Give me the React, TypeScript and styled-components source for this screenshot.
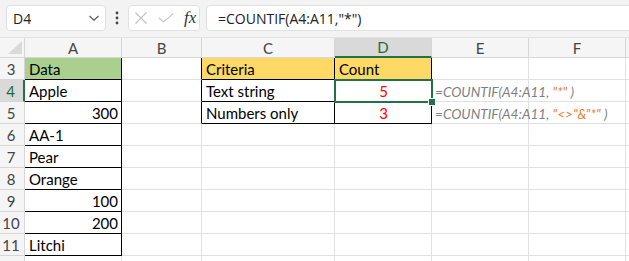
import React from 'react';
import styled, { createGlobalStyle } from 'styled-components';

const GlobalStyle = createGlobalStyle`
  html, body {
    margin: 0;
    padding: 0;
    background: #ffffff;
    overflow: hidden;
  }
`;

const Page = styled.div`
  width: 629px;
  height: 261px;
  overflow: hidden;
  background: #ffffff;
  font-family: Lato, "Liberation Sans", sans-serif;
`;

const Toolbar = styled.div`
  height: 38px;
  box-sizing: border-box;
  padding: 5px 0 0 6px;
  background: #f3f3f3;
  border-bottom: 1px solid #e3e3e3;
  display: flex;
  align-items: flex-start;
  font-family: "Open Sans", "Noto Sans", sans-serif;
`;

const NameBox = styled.div`
  width: 100px;
  height: 26px;
  box-sizing: border-box;
  background: #ffffff;
  border: 1px solid #e1e1e1;
  border-radius: 4px;
  display: flex;
  align-items: center;
  justify-content: space-between;
  padding: 0 5px 0 6px;
  font-size: 14px;
  color: #222;
`;

const Dots = styled.div`
  width: 22px;
  height: 26px;
  display: flex;
  align-items: center;
  justify-content: center;
`;

const FxBox = styled.div`
  width: 72px;
  height: 26px;
  box-sizing: border-box;
  background: #ffffff;
  border: 1px solid #e1e1e1;
  border-radius: 4px;
  display: flex;
  align-items: center;
  padding-left: 4px;
  gap: 10px;
`;

const FxLabel = styled.span`
  font-family: "Liberation Serif", serif;
  font-style: italic;
  font-size: 17px;
  color: #333;
`;

const FormulaInput = styled.div`
  flex: 1;
  height: 26px;
  margin-left: 6px;
  margin-right: -6px;
  box-sizing: border-box;
  background: #ffffff;
  border: 1px solid #e1e1e1;
  border-radius: 4px;
  display: flex;
  align-items: center;
  padding-left: 11px;
  font-size: 14px;
  color: #222;
  white-space: nowrap;
`;

const Sheet = styled.div`
  display: grid;
  grid-template-columns: 25px 97px 80px 133px 97px 97px 97px 30px;
  grid-template-rows: 20px repeat(10, 22px);
`;

const ColHead = styled.div<{ $active?: boolean }>`
  box-sizing: border-box;
  background: ${p => (p.$active ? '#d9d9d9' : '#f5f5f5')};
  border-right: 1px solid #d6d6d6;
  border-bottom: ${p => (p.$active ? '2px solid #217346' : '1px solid #d6d6d6')};
  color: ${p => (p.$active ? '#1e6b41' : '#444')};
  font-size: 15px;
  display: flex;
  align-items: center;
  justify-content: center;
`;

const Corner = styled(ColHead)`
  align-items: flex-end;
  justify-content: flex-end;
  padding: 0 2px 3px 0;
`;

const RowHead = styled.div<{ $active?: boolean }>`
  box-sizing: border-box;
  background: ${p => (p.$active ? '#d9d9d9' : '#f5f5f5')};
  border-right: ${p => (p.$active ? '2px solid #217346' : '1px solid #d6d6d6')};
  border-bottom: 1px solid #d6d6d6;
  color: ${p => (p.$active ? '#1e6b41' : '#444')};
  font-size: 15px;
  line-height: 21px;
  padding-top: 1px;
  text-align: center;
  padding-right: 2px;
  overflow: hidden;
`;

const Cell = styled.div<{
  $fill?: string;
  $align?: string;
  $color?: string;
  $right?: boolean;
  $bottom?: boolean;
}>`
  box-sizing: border-box;
  position: relative;
  background: ${p => p.$fill || '#ffffff'};
  border-right: 1px solid ${p => (p.$right ? '#000' : '#e1e1e1')};
  border-bottom: 1px solid ${p => (p.$bottom ? '#000' : '#e1e1e1')};
  color: ${p => p.$color || '#000'};
  text-align: ${p => p.$align || 'left'};
  font-size: 15px;
  line-height: 22px;
  padding: 0 3px 0 4px;
  white-space: nowrap;
  overflow: visible;
`;

// spills over into the next columns, as excel does for long text
const Note = styled.span`
  position: relative;
  z-index: 1;
  font-style: italic;
  font-size: 13.6px;
  color: #7f7f7f;
  margin-left: -1px;
`;

const Str = styled.span`
  color: #ed7d31;
`;

const Selection = styled.div`
  position: absolute;
  left: -1px;
  top: -1px;
  width: 99px;
  height: 24px;
  box-sizing: border-box;
  border: 2px solid #217346;
  pointer-events: none;
  z-index: 2;
`;

const Handle = styled.div`
  position: absolute;
  left: 94px;
  top: 19px;
  width: 6px;
  height: 6px;
  background: #217346;
  box-shadow: 0 0 0 1px #ffffff;
  z-index: 3;
`;

type CellData = {
  text?: React.ReactNode;
  fill?: string;
  align?: string;
  color?: string;
};

const GREEN = '#a9d08e';
const GOLD = '#ffd966';
const RED = '#ff0000';

const columns = ['A', 'B', 'C', 'D', 'E', 'F', ''];
const rows = [3, 4, 5, 6, 7, 8, 9, 10, 11, 12];

const cells: Record<string, CellData> = {
  A3: { text: 'Data', fill: GREEN },
  A4: { text: 'Apple' },
  A5: { text: '300', align: 'right' },
  A6: { text: 'AA-1' },
  A7: { text: 'Pear' },
  A8: { text: 'Orange' },
  A9: { text: '100', align: 'right' },
  A10: { text: '200', align: 'right' },
  A11: { text: 'Litchi' },
  C3: { text: 'Criteria', fill: GOLD },
  D3: { text: 'Count', fill: GOLD },
  C4: { text: 'Text string' },
  D4: { text: '5', align: 'center', color: RED },
  C5: { text: 'Numbers only' },
  D5: { text: '3', align: 'center', color: RED },
  E4: {
    text: (
      <Note>
        =COUNTIF(A4:A11, <Str>"*"</Str> )
      </Note>
    ),
  },
  E5: {
    text: (
      <Note>
        =COUNTIF(A4:A11, <Str>"&lt;&gt;"&amp;"*"</Str> )
      </Note>
    ),
  },
};

const boxed = (col: number, row: number) => {
  if (col === 0) return row >= 3 && row <= 11;
  if (col === 2 || col === 3) return row >= 3 && row <= 5;
  return false;
};

const ChevronIcon = () => (
  <svg width="12" height="8" viewBox="0 0 12 8">
    <path d="M1.5 2 L6 6.2 L10.5 2" fill="none" stroke="#555" strokeWidth="1.2" />
  </svg>
);

const DotsIcon = () => (
  <svg width="4" height="14" viewBox="0 0 4 14">
    <circle cx="2" cy="2" r="1.4" fill="#444" />
    <circle cx="2" cy="7" r="1.4" fill="#444" />
    <circle cx="2" cy="12" r="1.4" fill="#444" />
  </svg>
);

const CancelIcon = () => (
  <svg width="14" height="12" viewBox="0 0 14 12" style={{ marginLeft: 1 }}>
    <path d="M1.5 0.5 L12.5 11.5 M12.5 0.5 L1.5 11.5" stroke="#c2c2c2" strokeWidth="1.1" />
  </svg>
);

const CheckIcon = () => (
  <svg width="16" height="10" viewBox="0 0 16 10">
    <path d="M0.8 4.6 L5.4 9 L15.2 0.6" fill="none" stroke="#c2c2c2" strokeWidth="1.1" />
  </svg>
);

const CornerIcon = () => (
  <svg width="14" height="13" viewBox="0 0 14 13">
    <path d="M14 0 L14 13 L0 13 Z" fill="#dadada" />
  </svg>
);

export default function App() {
  return (
    <Page>
      <GlobalStyle />
      <Toolbar>
        <NameBox>
          <span>D4</span>
          <ChevronIcon />
        </NameBox>
        <Dots>
          <DotsIcon />
        </Dots>
        <FxBox>
          <CancelIcon />
          <CheckIcon />
          <FxLabel>fx</FxLabel>
        </FxBox>
        <FormulaInput>=COUNTIF(A4:A11,"*")</FormulaInput>
      </Toolbar>

      <Sheet>
        <Corner>
          <CornerIcon />
        </Corner>
        {columns.map(c => (
          <ColHead key={c || 'extra'} $active={c === 'D'}>
            {c}
          </ColHead>
        ))}

        {rows.map(r => (
          <React.Fragment key={r}>
            <RowHead $active={r === 4}>{r}</RowHead>
            {columns.map((c, ci) => {
              const key = `${c}${r}`;
              const data = cells[key] || {};
              const right = boxed(ci, r) || boxed(ci + 1, r);
              const bottom = boxed(ci, r) || boxed(ci, r + 1);
              return (
                <Cell
                  key={key || `x${r}`}
                  $fill={data.fill}
                  $align={data.align}
                  $color={data.color}
                  $right={right}
                  $bottom={bottom}
                >
                  {data.text}
                  {key === 'D4' && (
                    <>
                      <Selection />
                      <Handle />
                    </>
                  )}
                </Cell>
              );
            })}
          </React.Fragment>
        ))}
      </Sheet>
    </Page>
  );
}
